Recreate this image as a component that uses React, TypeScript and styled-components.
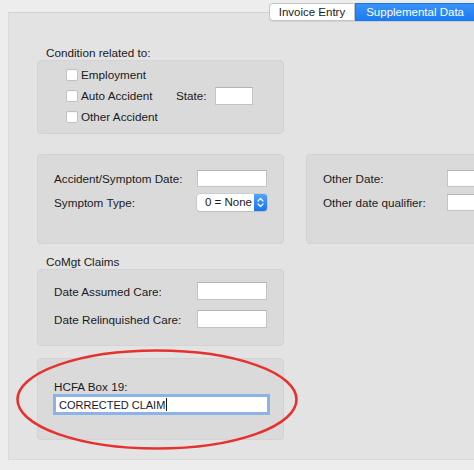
import React from "react";
import styled, { createGlobalStyle } from "styled-components";

const Global = createGlobalStyle`
  html, body {
    margin: 0;
    padding: 0;
    background: #ececec;
    overflow: hidden;
  }
  body {
    font-family: "Liberation Sans", Arial, Helvetica, sans-serif;
    font-size: 11.7px;
    color: #1a1a1a;
  }
`;

const Window = styled.div`
  position: relative;
  width: 474px;
  height: 470px;
  box-sizing: border-box;
  padding: 3px 0 0 8px;
  background: #ededed;
  overflow: hidden;
`;

const TabBar = styled.div`
  position: relative;
  z-index: 1;
  display: flex;
  justify-content: flex-end;
  height: 18px;
  margin-bottom: -9px;
`;

const Tab = styled.div<{ $active?: boolean }>`
  display: flex;
  align-items: center;
  box-sizing: border-box;
  height: 18px;
  padding: 0 ${(p) => (p.$active ? 10 : 9)}px;
  font-size: 11.5px;
  white-space: nowrap;
  border: 1px solid ${(p) => (p.$active ? "#1877ee" : "#c4c4c4")};
  border-right: ${(p) => (p.$active ? "none" : "1px solid #c4c4c4")};
  border-radius: ${(p) => (p.$active ? "0" : "4px 0 0 4px")};
  background: ${(p) =>
    p.$active ? "linear-gradient(#3a92f8, #1a7cf3)" : "#ffffff"};
  color: ${(p) => (p.$active ? "#ffffff" : "#1a1a1a")};
  box-shadow: 0 1px 1px rgba(0, 0, 0, 0.08);
`;

const Panel = styled.div`
  height: 448px;
  box-sizing: border-box;
  background: #e3e3e3;
  border-top: 1px solid #d3d3d3;
  border-left: 1px solid #d9d9d9;
  border-bottom: 1px solid #dadada;
  padding: 33px 0 0 28px;
  overflow: hidden;
`;

const SectionLabel = styled.div<{ $mt?: number }>`
  height: 14px;
  line-height: 14px;
  font-size: 11.7px;
  margin: ${(p) => p.$mt ?? 0}px 0 0 9px;
`;

const Group = styled.div<{ $pad: string; $mt?: number }>`
  box-sizing: border-box;
  width: 247px;
  flex-shrink: 0;
  background: #dadada;
  border: 1px solid #d3d3d3;
  border-radius: 4px;
  padding: ${(p) => p.$pad};
  margin-top: ${(p) => p.$mt ?? 0}px;
`;

const GroupRow = styled.div`
  display: flex;
  gap: 22px;
  margin-top: 20px;
`;

const CheckRow = styled.div`
  display: flex;
  align-items: center;
  height: 21px;
`;

const CheckBox = styled.span`
  width: 12px;
  height: 12px;
  box-sizing: border-box;
  background: #ffffff;
  border: 1px solid #c2c2c2;
  border-radius: 2px;
  margin-right: 3px;
  box-shadow: inset 0 1px 0 #f6f6f6;
`;

const CheckText = styled.span<{ $w?: number }>`
  font-size: 11.7px;
  width: ${(p) => (p.$w ? `${p.$w}px` : "auto")};
  white-space: nowrap;
`;

const InlineLabel = styled.span`
  font-size: 11.7px;
  margin-right: 8px;
`;

const TextBox = styled.div<{ $w: number; $h: number }>`
  width: ${(p) => p.$w}px;
  height: ${(p) => p.$h}px;
  box-sizing: border-box;
  background: #ffffff;
  border: 1px solid #c3c3c3;
  border-top-color: #b3b3b3;
`;

const FieldGrid = styled.div<{ $label: number; $row: number; $gap: number }>`
  display: grid;
  grid-template-columns: ${(p) => p.$label}px 70px;
  grid-auto-rows: ${(p) => p.$row}px;
  row-gap: ${(p) => p.$gap}px;
  align-items: center;
`;

const FieldLabel = styled.span`
  font-size: 11.7px;
  white-space: nowrap;
`;

const BlockLabel = styled.div`
  height: 14px;
  line-height: 14px;
  font-size: 11.7px;
  white-space: nowrap;
`;

const Select = styled.div`
  display: flex;
  align-items: stretch;
  width: 70px;
  height: 17px;
  box-sizing: border-box;
  background: #ffffff;
  border-radius: 3px;
  box-shadow: 0 0 0 0.5px #bdbdbd, 0 1px 1px rgba(0, 0, 0, 0.12);
  overflow: hidden;
`;

const SelectValue = styled.span`
  flex: 1;
  font-size: 11.5px;
  line-height: 17px;
  text-align: right;
  padding-right: 2px;
  white-space: nowrap;
`;

const Stepper = styled.span`
  width: 13px;
  display: flex;
  align-items: center;
  justify-content: center;
  background: linear-gradient(#56a3f9, #1775ee);
`;

const FocusField = styled.div`
  display: flex;
  align-items: center;
  width: 213px;
  height: 17px;
  box-sizing: border-box;
  margin: 2px 0 0 1px;
  padding-left: 3px;
  background: #ffffff;
  border: 1px solid #8db3e6;
  box-shadow: 0 0 0 2px rgba(112, 165, 235, 0.75);
  font-size: 11px;
  white-space: nowrap;
`;

const Caret = styled.span`
  display: inline-block;
  width: 1px;
  height: 13px;
  background: #1a1a1a;
  margin-left: 1px;
`;

const Annotation = styled.svg`
  position: absolute;
  left: 0;
  top: 0;
  pointer-events: none;
`;

export default function App() {
  return (
    <>
      <Global />
      <Window>
        <TabBar>
          <Tab>Invoice Entry</Tab>
          <Tab $active>Supplemental Data</Tab>
        </TabBar>
        <Panel>
          <SectionLabel>Condition related to:</SectionLabel>
          <Group $pad="3px 0 6px 28px">
            <CheckRow>
              <CheckBox />
              <CheckText>Employment</CheckText>
            </CheckRow>
            <CheckRow>
              <CheckBox />
              <CheckText $w={95}>Auto Accident</CheckText>
              <InlineLabel>State:</InlineLabel>
              <TextBox $w={38} $h={18} />
            </CheckRow>
            <CheckRow>
              <CheckBox />
              <CheckText>Other Accident</CheckText>
            </CheckRow>
          </Group>

          <GroupRow>
            <Group $pad="15px 0 32px 16px">
              <FieldGrid $label={143} $row={17} $gap={7}>
                <FieldLabel>Accident/Symptom Date:</FieldLabel>
                <TextBox $w={70} $h={17} />
                <FieldLabel>Symptom Type:</FieldLabel>
                <Select>
                  <SelectValue>0 = None</SelectValue>
                  <Stepper>
                    <svg width="7" height="11" viewBox="0 0 7 11">
                      <path
                        d="M1 4 L3.5 1.5 L6 4 M1 7 L3.5 9.5 L6 7"
                        fill="none"
                        stroke="#ffffff"
                        strokeWidth="1.2"
                        strokeLinecap="round"
                        strokeLinejoin="round"
                      />
                    </svg>
                  </Stepper>
                </Select>
              </FieldGrid>
            </Group>
            <Group $pad="15px 0 32px 16px">
              <FieldGrid $label={124} $row={17} $gap={7}>
                <FieldLabel>Other Date:</FieldLabel>
                <TextBox $w={70} $h={17} />
                <FieldLabel>Other date qualifier:</FieldLabel>
                <TextBox $w={70} $h={17} />
              </FieldGrid>
            </Group>
          </GroupRow>

          <SectionLabel $mt={11}>CoMgt Claims</SectionLabel>
          <Group $pad="12px 0 17px 16px">
            <FieldGrid $label={143} $row={18} $gap={10}>
              <FieldLabel>Date Assumed Care:</FieldLabel>
              <TextBox $w={70} $h={18} />
              <FieldLabel>Date Relinquished Care:</FieldLabel>
              <TextBox $w={70} $h={18} />
            </FieldGrid>
          </Group>

          <Group $pad="21px 0 26px 16px" $mt={12}>
            <BlockLabel>HCFA Box 19:</BlockLabel>
            <FocusField>
              CORRECTED CLAIM
              <Caret />
            </FocusField>
          </Group>
        </Panel>
        <Annotation width="474" height="470" viewBox="0 0 474 470">
          <ellipse
            cx="157"
            cy="399.5"
            rx="139.5"
            ry="49"
            fill="none"
            stroke="#e5322f"
            strokeWidth="2.6"
          />
        </Annotation>
      </Window>
    </>
  );
}
